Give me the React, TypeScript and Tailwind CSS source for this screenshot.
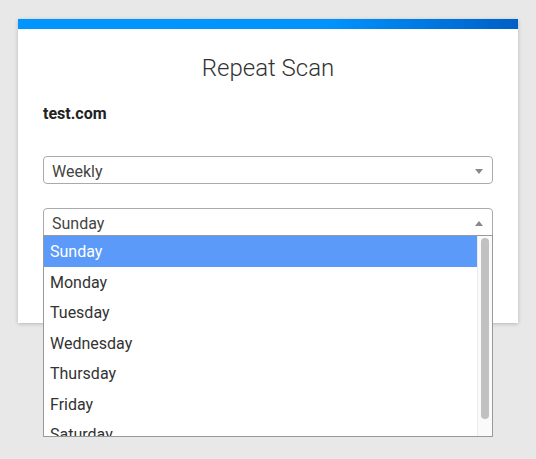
import React from "react";

const days = ["Sunday", "Monday", "Tuesday", "Wednesday", "Thursday", "Friday", "Saturday"];

function Arrow({ up }: { up?: boolean }) {
  return (
    <svg width="8" height="5" viewBox="0 0 8 5" className="absolute right-[9px] top-[12px]">
      {up ? <polygon points="0,5 8,5 4,0" fill="#888" /> : <polygon points="0,0 8,0 4,5" fill="#888" />}
    </svg>
  );
}

export default function App() {
  return (
    <div
      className="min-h-[459px] w-full bg-[#e8e8e8] pt-[19px] pl-[18px]"
      style={{ fontFamily: "Roboto, 'Noto Sans', sans-serif" }}
    >
      <div className="w-[500px] h-[304px] bg-white shadow-[0_1px_4px_rgba(0,0,0,0.22)]">
        <div className="h-[10px] bg-[linear-gradient(90deg,#0095ff_0%,#0093fe_62%,#005fc7_100%)]" />
        <div className="px-[25px]">
          <h1 className="mt-[23px] text-center text-[24px] leading-[32px] font-light text-[#333]">Repeat Scan</h1>
          <div className="mt-[18px] text-[16px] leading-[24px] font-bold text-[#222]">test.com</div>
          <div className="relative mt-[30px] h-[28px] rounded-[4px] border border-[#aaa] bg-white pl-[8px] pt-[5px] text-[16px] leading-[19px] text-[#444]">
            Weekly
            <Arrow />
          </div>
          <div className="relative mt-[24px]">
            <div className="relative h-[28px] rounded-t-[4px] border border-[#aaa] bg-white pl-[8px] pt-[5px] text-[16px] leading-[19px] text-[#444]">
              Sunday
              <Arrow up />
            </div>
            <div className="absolute left-0 right-0 top-[27px] z-10 flex h-[202px] border border-[#999] bg-white">
              <div className="flex-1 overflow-hidden">
                {days.map((d, i) => (
                  <div
                    key={d}
                    className={
                      i === 0
                        ? "h-[30.5px] bg-[#5b9af9] pl-[6px] pt-[6px] text-[16px] leading-[19px] text-white"
                        : "h-[30.5px] pl-[6px] pt-[6px] text-[16px] leading-[19px] text-[#333]"
                    }
                  >
                    {d}
                  </div>
                ))}
              </div>
              <div className="w-[15px] border-l border-[#ececec] bg-[#fafafa] pl-[3px] pt-[2px]">
                <div className="h-[181px] w-[8px] rounded-full bg-[#c1c1c1]" />
              </div>
            </div>
          </div>
        </div>
      </div>
    </div>
  );
}
